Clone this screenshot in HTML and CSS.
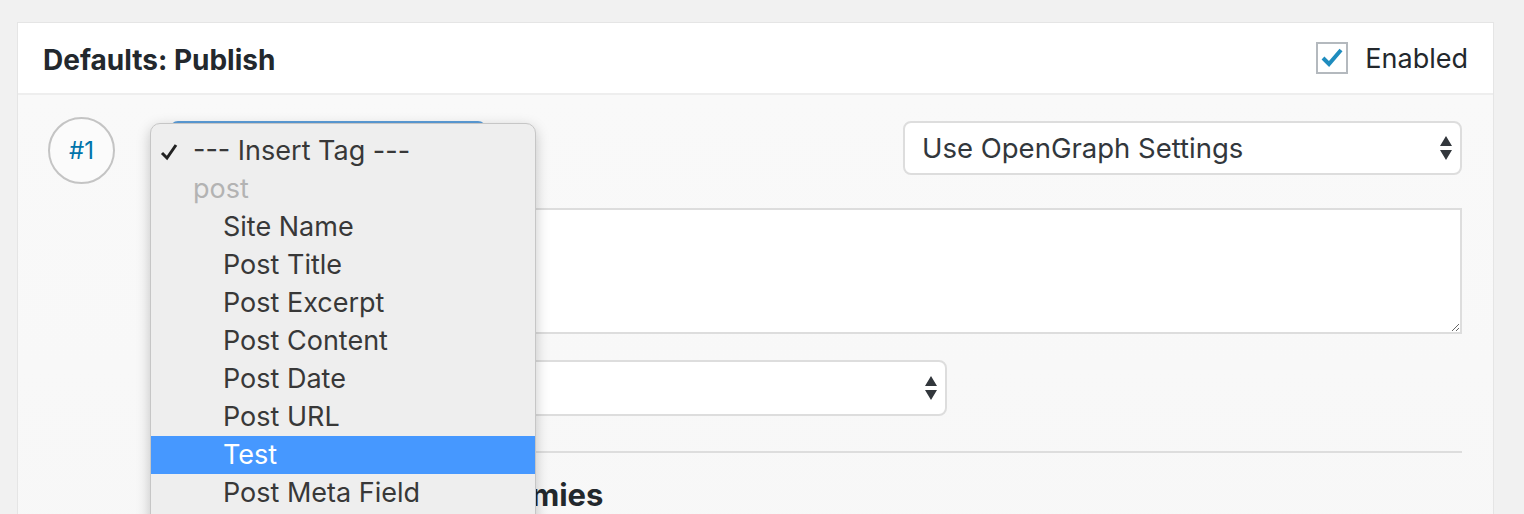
FILE: index.html
```html
<!DOCTYPE html>
<html>
<head>
<meta charset="utf-8">
<link rel="stylesheet" href="styles.css">
</head>
<body>
<div class="card">
  <div class="card-head">
    <h2 class="title">Defaults: Publish</h2>
    <label class="enabled">
      <span class="checkbox">
        <svg width="22" height="20" viewBox="0 0 22 20"><path d="M2 10 L8 16 L20 2" fill="none" stroke="#1e8cbe" stroke-width="4" stroke-linejoin="miter"/></svg>
      </span>
      <span class="enabled-text">Enabled</span>
    </label>
  </div>
  <div class="card-body">
    <div class="num">#1</div>
    <div class="fields">
      <div class="row-top">
        <div class="select select-focus"></div>
        <div class="select select-og">
          <span>Use OpenGraph Settings</span>
          <svg class="arrows" width="14" height="26" viewBox="0 0 14 26"><path d="M7 1 L13 11 L1 11 Z M1 15 L13 15 L7 25 Z" fill="#32373c"/></svg>
        </div>
      </div>
      <textarea class="textarea"></textarea>
      <div class="select select-second">
        <span></span>
        <svg class="arrows" width="14" height="26" viewBox="0 0 14 26"><path d="M7 1 L13 11 L1 11 Z M1 15 L13 15 L7 25 Z" fill="#32373c"/></svg>
      </div>
      <hr class="sep">
      <h3 class="section">Set Default Post Taxonomies</h3>
    </div>
    <div class="menu">
      <div class="item checked"><svg class="tick" width="18" height="18" viewBox="0 0 18 18"><path d="M2 10 L7 15 L16 2" fill="none" stroke="#222" stroke-width="3"/></svg>--- Insert Tag ---</div>
      <div class="item group">post</div>
      <div class="item sub">Site Name</div>
      <div class="item sub">Post Title</div>
      <div class="item sub">Post Excerpt</div>
      <div class="item sub">Post Content</div>
      <div class="item sub">Post Date</div>
      <div class="item sub">Post URL</div>
      <div class="item sub active">Test</div>
      <div class="item sub">Post Meta Field</div>
    </div>
  </div>
</div>
</body>
</html>
```

FILE: styles.css
```css
html, body {
  margin: 0;
  padding: 0;
  background: #f1f1f1;
  overflow: hidden;
}
body {
  padding: 22px 30px 0 17px;
  font-family: Inter, "Liberation Sans", sans-serif;
  color: #23282d;
  height: 514px;
  box-sizing: border-box;
}
.card {
  border: 1px solid #e5e5e5;
  border-bottom: none;
  background: #fff;
  height: 600px;
}
.card-head {
  height: 70px;
  border-bottom: 2px solid #eeeeee;
  display: flex;
  align-items: center;
  justify-content: space-between;
  padding: 0 25px 0 25px;
}
.title {
  margin: 0;
  font-size: 28px;
  font-weight: 700;
  color: #23282d;
  padding-top: 3px;
}
.enabled {
  display: flex;
  align-items: center;
  gap: 17px;
}
.checkbox {
  width: 28px;
  height: 28px;
  border: 2px solid #b4b9be;
  background: #fff;
  display: flex;
  align-items: center;
  justify-content: center;
}
.enabled-text {
  font-size: 27px;
  color: #23282d;
}
.card-body {
  position: relative;
  display: flex;
  gap: 55px;
  padding: 22px 31px 0 30px;
  background: linear-gradient(to bottom, #f9f9f9, #f7f7f7);
  height: 520px;
}
.num {
  width: 63px;
  height: 63px;
  border: 2px solid #c4c4c4;
  border-radius: 50%;
  display: flex;
  align-items: center;
  justify-content: center;
  font-size: 24px;
  color: #0073aa;
  flex-shrink: 0;
  background: #fbfbfb;
}
.fields {
  flex: 1;
  display: flex;
  flex-direction: column;
  padding-top: 4px;
}
.row-top {
  display: flex;
  justify-content: space-between;
  height: 54px;
}
.select {
  box-sizing: border-box;
  height: 54px;
  border: 2px solid #dddddd;
  border-radius: 8px;
  background: #fff;
  display: flex;
  align-items: center;
  justify-content: space-between;
  padding: 0 7px 0 17px;
  font-size: 27.5px;
  color: #32373c;
}
.select-focus {
  width: 316px;
  border-color: #5b9dd9;
}
.select-og {
  width: 559px;
}
.textarea {
  display: block;
  box-sizing: border-box;
  margin-top: 33px;
  height: 126px;
  width: 100%;
  border: 2px solid #dddddd;
  background: #fff;
  resize: vertical;
}
.select-second {
  margin-top: 26px;
  width: 777px;
  height: 56px;
}
.sep {
  margin: 35px 0 0 0;
  border: none;
  border-top: 2px solid #dddddd;
  height: 0;
}
.section {
  margin: 23px 0 0 0;
  font-size: 31px;
  line-height: 37px;
  font-weight: 700;
  color: #23282d;
  white-space: nowrap;
}
.menu {
  position: absolute;
  left: 132px;
  top: 28px;
  width: 386px;
  height: 430px;
  box-sizing: border-box;
  padding-top: 8px;
  background: #eeeeee;
  border: 1px solid #c6c6c6;
  border-radius: 10px 10px 0 0;
  box-shadow: 0 4px 14px rgba(0,0,0,0.22);
  font-size: 27px;
  color: #383838;
}
.item {
  height: 38px;
  line-height: 38px;
  padding-left: 42px;
  position: relative;
  white-space: nowrap;
}
.item.sub {
  padding-left: 72px;
}
.item.group {
  color: #b3b3b3;
}
.item.active {
  background: #4698ff;
  color: #fff;
}
.tick {
  position: absolute;
  left: 9px;
  top: 11px;
}
```
